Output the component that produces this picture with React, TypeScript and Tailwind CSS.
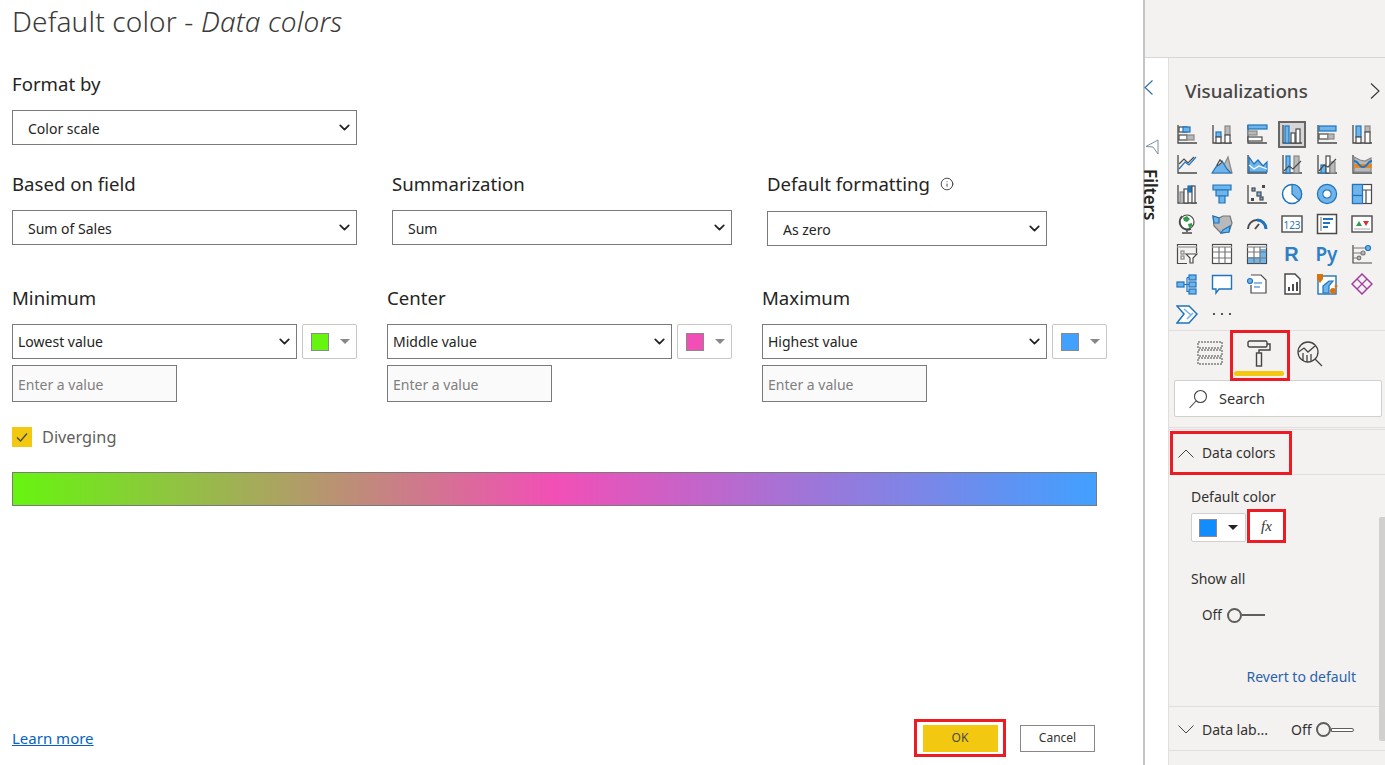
import type { ReactNode } from "react";
import { ChevronDown, Info } from "lucide-react";

const font = "font-['Noto_Sans','Open_Sans',sans-serif]";
const dk = "#4a4a4a";
const bl = "#1f74bd";
const lb = "#6fb4ea";
const gr = "#b9b9b9";

function Ico({ children }: { children: ReactNode }) {
  return (
    <svg viewBox="0 0 22 22" width="22" height="22" fill="none" strokeWidth="1.2" stroke={dk}>
      {children}
    </svg>
  );
}

function Axes() {
  return <path d="M2 2V20H21" stroke={dk} strokeWidth="1.3" />;
}

function ThinChevron({ up }: { up?: boolean }) {
  return (
    <svg viewBox="0 0 16 9" width="16" height="9" fill="none" stroke="#444" strokeWidth="1">
      <path d={up ? "M0.5 8.5 8 1l7.5 7.5" : "M0.5 0.5 8 8l7.5-7.5"} />
    </svg>
  );
}

const vizIcons: ReactNode[] = [
  <Ico><Axes /><rect x="3" y="4" width="8" height="5" fill="#fff" stroke={dk} /><rect x="7" y="4" width="7" height="5" fill={lb} stroke={bl} /><rect x="3" y="12" width="8" height="5" fill="#fff" stroke={dk} /><rect x="11" y="12" width="7" height="5" fill={gr} stroke="#888" /></Ico>,
  <Ico><Axes /><rect x="5" y="9" width="5" height="5" fill={lb} stroke={bl} /><rect x="5" y="14" width="5" height="6" fill="#fff" /><rect x="14" y="3" width="5" height="9" fill={gr} stroke="#888" /><rect x="14" y="12" width="5" height="8" fill="#fff" /></Ico>,
  <Ico><Axes /><rect x="2" y="2" width="19" height="4" fill={lb} stroke={bl} /><rect x="2" y="8" width="9" height="4" fill={gr} stroke="#888" /><rect x="2" y="14" width="14" height="4" fill="#fff" /></Ico>,
  <Ico><Axes /><rect x="4" y="3" width="4" height="17" fill={lb} stroke={bl} /><rect x="10" y="10" width="4" height="10" fill="#fff" /><rect x="15" y="6" width="4" height="14" fill="#fff" /></Ico>,
  <Ico><Axes /><rect x="3" y="3" width="17" height="5" fill={lb} stroke={bl} /><rect x="3" y="11" width="9" height="5" fill="#fff" /><rect x="12" y="11" width="6" height="5" fill={gr} stroke="#888" /></Ico>,
  <Ico><Axes /><rect x="5" y="3" width="5" height="11" fill={lb} stroke={bl} /><rect x="5" y="14" width="5" height="6" fill="#fff" /><rect x="14" y="3" width="5" height="6" fill={gr} stroke="#888" /><rect x="14" y="9" width="5" height="11" fill="#fff" /></Ico>,
  <Ico><Axes /><path d="M3 11 8 6l4 4 6-6" stroke={dk} /><path d="M3 16 9 9l4 3 7-8" stroke={bl} /></Ico>,
  <Ico><path d="M2 20 9 7l4 5 4-8 4 16Z" fill={gr} stroke="#888" /><path d="M1 20 5 14 11 8l5 8 4 4Z" fill={lb} stroke={bl} /><path d="M6 12 9 7l2 2-3 3Z" fill="#fff" /></Ico>,
  <Ico><Axes /><path d="M3 4 8 11l4-4 5 6 4-4v10H3Z" fill={lb} stroke={bl} /><path d="M3 12l5 4 5-3 8 3" stroke="#fff" /></Ico>,
  <Ico><Axes /><rect x="5" y="3" width="4" height="17" fill={lb} stroke={bl} /><rect x="13" y="3" width="5" height="17" fill={gr} stroke="#888" /><path d="M3 18 8 13l4 3 8-8" /></Ico>,
  <Ico><Axes /><rect x="5" y="12" width="5" height="8" fill={lb} stroke={bl} /><rect x="10" y="3" width="4" height="17" fill="#fff" /><rect x="14" y="9" width="5" height="11" fill={gr} stroke="#888" /><path d="M3 18 8 12l4 2 8-8" /></Ico>,
  <Ico><Axes /><path d="M3 4 9 7l5 1 6-3v14H3Z" fill={gr} stroke="#888" /><path d="M3 11h18v4H3Z" fill="#e28a2b" stroke="none" /><path d="M3 8c5 0 4 6 9 6s4-6 9-6" stroke={bl} strokeWidth="2" /></Ico>,
  <Ico><Axes /><rect x="4" y="9" width="4" height="11" fill={gr} stroke="#888" /><rect x="8" y="6" width="4" height="14" fill="#fff" /><rect x="12" y="3" width="4" height="6" fill={bl} stroke={bl} /><rect x="16" y="3" width="3" height="17" fill="#fff" /></Ico>,
  <Ico><path d="M2 2H20V7H2Z" fill={lb} stroke={bl} /><path d="M5 7H17V13H5Z" fill={lb} stroke={bl} /><path d="M8 13H14V20H8Z" fill={lb} stroke={bl} /></Ico>,
  <Ico><Axes /><rect x="6" y="5" width="3" height="3" fill={lb} /><rect x="11" y="9" width="4" height="4" fill={lb} /><rect x="16" y="2" width="3" height="3" fill={dk} stroke="none" /><rect x="5" y="15" width="3" height="3" fill={dk} stroke="none" /><rect x="14" y="14" width="3" height="3" fill={lb} /></Ico>,
  <Ico><circle cx="11" cy="11" r="9.5" fill="#fff" stroke={bl} strokeWidth="1.5" /><path d="M11 11V1.5A9.5 9.5 0 0 1 18 17.5Z" fill={lb} stroke={bl} /></Ico>,
  <Ico><circle cx="11" cy="11" r="7" fill="#fff" stroke={lb} strokeWidth="5" /><circle cx="11" cy="11" r="4.2" stroke={bl} /><circle cx="11" cy="11" r="9.6" stroke={bl} /></Ico>,
  <Ico><rect x="1.5" y="1.5" width="19" height="19" fill="#fff" stroke={dk} /><rect x="1.5" y="1.5" width="10" height="11" fill={lb} stroke={bl} /><rect x="1.5" y="12.5" width="10" height="8" fill={lb} stroke={bl} /><path d="M11.5 7H20.5M15 7V20.5" /></Ico>,
  <Ico><circle cx="11" cy="9" r="7" fill="#fff" /><path d="M7 5l4-2 3 3-3 3-3-1ZM12 11l4-1 0 3-3 2Z" fill="#2e9e4a" stroke="none" /><path d="M6 3A8 8 0 0 0 15 16M11 16V19M6 20H16" strokeWidth="1.5" /></Ico>,
  <Ico><path d="M2 3 8 5 12 3 19 3 21 10 18 19 10 20 3 13Z" fill={gr} stroke="#777" /><path d="M2 3 8 5V10H3ZM12 17l7-4-1 6-8 1Z" fill={lb} stroke={bl} /></Ico>,
  <Ico><path d="M2 16A9 9 0 0 1 20 16" strokeWidth="2" /><path d="M11 7A9 9 0 0 1 20 16" stroke={bl} strokeWidth="3" /><path d="M9 16 13 11" strokeWidth="2" /></Ico>,
  <Ico><rect x="1" y="3" width="20" height="16" fill="#fff" stroke={dk} strokeWidth="1.4" /><text x="11" y="15.5" textAnchor="middle" fontSize="10" fill={bl} stroke="none" fontFamily="Noto Sans">123</text></Ico>,
  <Ico><rect x="1.5" y="1.5" width="19" height="19" fill="#fff" strokeWidth="1.5" /><path d="M5 4V18" stroke={gr} strokeWidth="2" /><path d="M7 6H17M7 10H14M7 14H12" stroke={bl} strokeWidth="1.8" /></Ico>,
  <Ico><rect x="1" y="3" width="20" height="16" fill="#fff" strokeWidth="1.4" /><path d="M5 13 8 8l3 5Z" fill="#2e9e4a" stroke="none" /><path d="M12 8h6l-3 5Z" fill="#d13438" stroke="none" /><path d="M3 16H19" stroke={gr} /></Ico>,
  <Ico><path d="M1.5 17V1.5H20.5V10M1.5 17V20.5H11" /><path d="M1.5 4H20.5" stroke={gr} strokeWidth="2" /><rect x="5" y="8" width="3" height="3" stroke="#888" /><rect x="5" y="13" width="3" height="3" stroke="#888" /><path d="M10 11H21L17 15V20H14V15Z" fill="#fff" /></Ico>,
  <Ico><rect x="1.5" y="1.5" width="19" height="19" fill="#fff" /><path d="M1.5 4H20.5" stroke={gr} strokeWidth="2" /><path d="M1.5 9H20.5M1.5 15H20.5M8 4V20.5M14 4V20.5" stroke="#777" /></Ico>,
  <Ico><rect x="1.5" y="1.5" width="19" height="19" fill="#fff" /><path d="M1.5 4H20.5" stroke={gr} strokeWidth="2" /><path d="M14 6H20V20H2V14H14Z" fill={lb} stroke="none" /><path d="M1.5 9H20.5M1.5 15H20.5M8 4V20.5M14 4V20.5" stroke="#777" /></Ico>,
  <div className="font-['Liberation_Sans',sans-serif] text-[20px] font-bold leading-[22px] text-[#2f80c2]">R</div>,
  <div className="text-[19px] font-semibold leading-[22px] text-[#2f80c2]">Py</div>,
  <Ico><path d="M2 2V20H21" /><path d="M2 5H15M2 10H11M2 15H7" stroke="#777" /><circle cx="17" cy="5" r="2.5" fill={lb} stroke={bl} /><circle cx="12" cy="10" r="2" fill={gr} stroke="#777" /><circle cx="8" cy="15" r="1.8" fill={gr} stroke="#777" /></Ico>,
  <Ico><rect x="1" y="9" width="7" height="5" fill={lb} stroke={bl} /><rect x="13" y="2" width="7" height="5" fill={lb} stroke={bl} /><rect x="13" y="9" width="7" height="5" fill={lb} stroke={bl} /><rect x="13" y="16" width="7" height="5" fill={lb} stroke={bl} /><path d="M8 11.5H13M11 4.5V18.5H13M11 4.5H13" stroke={bl} /></Ico>,
  <Ico><path d="M1.5 2.5H20.5V16H8L5 20V16H1.5Z" fill="#fff" stroke={bl} strokeWidth="1.4" /></Ico>,
  <Ico><path d="M5 2H15L20 7V20H5V12" fill="#fff" /><circle cx="4" cy="8" r="2.5" fill={lb} stroke={bl} /><path d="M8 10H16M8 14H14" stroke={bl} /></Ico>,
  <Ico><path d="M4 1H14L19 6V21H4Z" fill="#fff" strokeWidth="1.5" /><path d="M7 18V14H9V18ZM11 18V11H13V18ZM15 18V9H17V18Z" fill={dk} stroke="none" /></Ico>,
  <Ico><rect x="2" y="3" width="18" height="18" fill="#fff" stroke={bl} strokeWidth="1.4" /><path d="M7 13 13 8H17L13 13V20H7Z" fill={lb} stroke={bl} /><path d="M1 1H7V6L4 10 1 6Z" fill="#d9730d" stroke="none" /><circle cx="17" cy="18" r="3" fill="#d9730d" stroke="none" /><circle cx="20" cy="13" r="1.5" fill="#d9730d" stroke="none" /></Ico>,
  <Ico><path d="M11 1 21 11 11 21 1 11Z" stroke="#a33ea1" strokeWidth="1.5" /><path d="M6 6 16 16M16 6 6 16" stroke="#a33ea1" /></Ico>,
  <Ico><path d="M1 3H13L21 11 13 20H1L8 11Z" fill="#fff" stroke={bl} strokeWidth="1.5" /><path d="M8 6 15 12M11 16 17 10" stroke={lb} strokeWidth="1.5" /></Ico>,
  <div className="flex h-[22px] items-center gap-[6px] px-[1px]"><span className="h-[2px] w-[2px] bg-[#555]" /><span className="h-[2px] w-[2px] bg-[#555]" /><span className="h-[2px] w-[2px] bg-[#555]" /></div>,
];

function Select({ value, width, mt }: { value: string; width: string; mt?: string }) {
  return (
    <div className={`flex h-[35px] items-center justify-between border border-[#7a7a7a] bg-white pr-[3px] text-[14px] text-[#252423] ${width} ${mt ?? ""}`}>
      <span className="pl-[15px] pt-[2px]">{value}</span>
      <ChevronDown size={17} strokeWidth={2.4} color="#222" />
    </div>
  );
}

function ColorColumn({ label, value, color }: { label: string; value: string; color: string }) {
  return (
    <div className="w-[345px]">
      <div className="text-[18.6px] leading-[26px] text-[#252423]">{label}</div>
      <div className="mt-[13px] flex gap-[5px]">
        <div className="flex h-[35px] w-[285px] items-center justify-between border border-[#7a7a7a] bg-white pr-[3px] text-[14px] text-[#252423]">
          <span className="pl-[5px]">{value}</span>
          <ChevronDown size={17} strokeWidth={2.4} color="#222" />
        </div>
        <div className="flex h-[35px] w-[55px] items-center gap-[11px] rounded-[2px] border border-[#c8c6c4] bg-white pl-[8px]">
          <span className={`h-[18px] w-[18px] border border-[#8a8a8a] ${color}`} />
          <span className="h-0 w-0 border-x-[5px] border-t-[5px] border-x-transparent border-t-[#8a8886]" />
        </div>
      </div>
      <div className="mt-[6px] flex h-[37px] w-[165px] items-center border border-[#7a7a7a] bg-[#fafafa] pl-[5px] pt-[1px] text-[14px] text-[#7f7f7f]">
        Enter a value
      </div>
    </div>
  );
}

function Toggle({ double }: { double?: boolean }) {
  return (
    <span className="flex items-center">
      <span className="h-[15px] w-[15px] rounded-full border-[2px] border-[#605e5c] bg-[#f3f2f1]" />
      {double ? (
        <span className="h-[4px] w-[23px] rounded-r-full border border-[#605e5c] bg-white" />
      ) : (
        <span className="h-[2px] w-[23px] bg-[#605e5c]" />
      )}
    </span>
  );
}

export default function App() {
  return (
    <div className={`flex h-[765px] w-[1385px] overflow-hidden bg-white ${font}`}>
      <main className="flex w-[1143px] flex-col pl-[12px]">
        <h1 className="mt-[2px] h-[39px] text-[28px] font-light leading-[38px] tracking-[0.15px] text-[#3b3a39]">
          Default color - <em>Data colors</em>
        </h1>

        <div className="mt-[30px] text-[18.6px] leading-[26px] text-[#252423]">Format by</div>
        <Select value="Color scale" width="w-[345px]" mt="mt-[13px]" />

        <div className="mt-[26px] flex">
          <div className="w-[345px]">
            <div className="text-[18.6px] leading-[26px] text-[#252423]">Based on field</div>
            <Select value="Sum of Sales" width="w-[345px]" mt="mt-[13px]" />
          </div>
          <div className="ml-[35px] w-[340px]">
            <div className="text-[18.6px] leading-[26px] text-[#252423]">Summarization</div>
            <Select value="Sum" width="w-[340px]" mt="mt-[13px]" />
          </div>
          <div className="ml-[35px] w-[280px]">
            <div className="flex items-center gap-[10px] text-[18.6px] leading-[26px] text-[#252423]">
              Default formatting
              <Info size={14} strokeWidth={1.5} color="#333" />
            </div>
            <Select value="As zero" width="w-[280px]" mt="mt-[14px]" />
          </div>
        </div>

        <div className="mt-[39px] flex gap-[30px]">
          <ColorColumn label="Minimum" value="Lowest value" color="bg-[#66f50f]" />
          <ColorColumn label="Center" value="Middle value" color="bg-[#f24fb6]" />
          <ColorColumn label="Maximum" value="Highest value" color="bg-[#42a0ff]" />
        </div>

        <div className="mt-[25px] flex items-center gap-[10px]">
          <span className="flex h-[20px] w-[20px] items-center justify-center bg-[#f2c811]">
            <svg viewBox="0 0 12 12" width="12" height="12" fill="none" stroke="#444" strokeWidth="1.2">
              <path d="M1 6.5 4.5 10 11 2.5" />
            </svg>
          </span>
          <span className="text-[16.3px] leading-[20px] text-[#605e5c]">Diverging</span>
        </div>

        <div className="mt-[25px] h-[34px] w-[1085px] border border-[#7a7a7a] bg-[linear-gradient(to_right,#66f50f,#f24fb6_50%,#42a0ff)]" />

        <div className="mb-[8px] mt-auto flex h-[38px] w-[1083px] items-center">
          <a className="text-[15px] text-[#0563c1] underline">Learn more</a>
          <div className="ml-auto flex items-center">
            <div className="flex h-[38px] w-[92px] items-center justify-center border-[3px] border-[#ed1c24]">
              <button className="h-[27px] w-[75px] bg-[#f2c811] text-[12px] text-[#4a4a4a]">OK</button>
            </div>
            <button className="ml-[14px] h-[27px] w-[75px] border border-[#8a8886] bg-white text-[12px] text-[#323130]">Cancel</button>
          </div>
        </div>
      </main>

      <div className="w-[2px] bg-[#c4c4c4]" />

      <div className="flex w-[240px] flex-col">
        <div className="h-[58px] border-b border-[#d6d6d6] bg-[#f3f2f1]" />
        <div className="flex flex-1">
          <aside className="flex w-[23px] flex-col items-start bg-white pt-[22px]">
            <svg className="-ml-[1px]" viewBox="0 0 9 15" width="9" height="15" fill="none" stroke="#2b6a9e" strokeWidth="1.1">
              <path d="M8.5 0.5 1 7.5l7.5 7" />
            </svg>
            <svg className="mt-[44px]" viewBox="0 0 14 16" width="14" height="16" fill="none" stroke="#7b8f9f" strokeWidth="1">
              <path d="M1 7.5 13 1V15L8 8Z" />
            </svg>
            <span className="-ml-[4px] mt-[14px] text-[17px] font-semibold leading-[18px] text-[#252423] [writing-mode:vertical-rl]">Filters</span>
          </aside>

          <section className="relative flex w-[217px] flex-col bg-[#f3f2f1] shadow-[inset_1px_0_0_#e1dfdd]">
            <div className="flex h-[61px] items-center justify-between pl-[17px] pr-[5px] pt-[5px]">
              <span className="text-[18.8px] font-medium text-[#484644]">Visualizations</span>
              <svg viewBox="0 0 10 16" width="10" height="16" fill="none" stroke="#333" strokeWidth="1.1">
                <path d="M1 0.5 9 8l-8 7.5" />
              </svg>
            </div>

            <div className="grid auto-rows-[30px] grid-cols-[repeat(6,35px)] pl-[1px]">
              {vizIcons.map((icon, i) => (
                <div key={i} className="flex items-center justify-center">
                  {i === 3 ? (
                    <span className="flex h-[27px] w-[28px] shrink-0 items-center justify-center border-[2px] border-[#666] bg-[#d6d6d6]">{icon}</span>
                  ) : (
                    icon
                  )}
                </div>
              ))}
            </div>

            <div className="mt-[1px] flex h-[51px] items-start border-t border-[#e1dfdd] pl-[29px]">
              <svg className="mt-[10px]" viewBox="0 0 26 24" width="26" height="24" fill="none" stroke="#444" strokeDasharray="2 1">
                <path d="M1 1H25V7H1ZM1 9H25V15H1ZM1 17H25V23H1Z" />
              </svg>
              <div className="relative -mt-[1px] ml-[7px] h-[51px] w-[60px] border-[3px] border-[#ed1c24]">
                <svg className="absolute left-[14px] top-[7px]" viewBox="0 0 24 27" width="24" height="27" fill="none" stroke="#444" strokeWidth="1.4">
                  <rect x="1" y="1" width="19" height="6" rx="1.5" />
                  <path d="M20 4H23V10H12V13" />
                  <rect x="9.5" y="13" width="5" height="13" fill="#f3f2f1" />
                </svg>
                <span className="absolute bottom-[2px] left-[1px] h-[5px] w-[50px] rounded-full bg-[#f2c811]" />
              </div>
              <svg className="ml-[7px] mt-[10px]" viewBox="0 0 26 26" width="26" height="26" fill="none" stroke="#444" strokeWidth="1.3">
                <circle cx="11" cy="11" r="10" />
                <path d="M18 18 25 25" />
                <path d="M1.5 11 7 7l4 4 7-6" />
                <path d="M6 12V20M10 14V21M14 13V20" />
              </svg>
            </div>

            <div className="ml-[6px] mt-[-1px] flex h-[37px] w-[208px] items-center rounded-[2px] border border-[#d2d0ce] bg-white pl-[13px] text-[14.5px] text-[#323130]">
              <svg viewBox="0 0 20 20" width="20" height="20" fill="none" stroke="#444" strokeWidth="1.1">
                <circle cx="12.5" cy="7.5" r="6" />
                <path d="M8 12 1.5 19" />
              </svg>
              <span className="ml-[11px]">Search</span>
            </div>

            <div className="mt-[10px] h-[3px] border-y border-[#e1dfdd]" />

            <div className="flex h-[45px] items-stretch border-b border-[#e1dfdd] pt-[1px]">
              <div className="-mb-[1px] ml-[2px] flex w-[122px] items-center gap-[8px] border-[3px] border-[#ed1c24] pl-[5px] text-[13.8px] text-[#323130]">
                <ThinChevron up />
                Data colors
              </div>
            </div>

            <div className="pl-[23px]">
              <div className="mt-[12px] text-[14px] leading-[20px] text-[#323130]">Default color</div>
              <div className="mt-[2px] flex items-start gap-[1px]">
                <div className="mt-[4px] flex h-[29px] w-[55px] items-center gap-[11px] rounded-[2px] border border-[#d2d0ce] bg-white pl-[7px]">
                  <span className="h-[18px] w-[18px] border border-[#8a8a8a] bg-[#118dff]" />
                  <span className="h-0 w-0 border-x-[5px] border-t-[5px] border-x-transparent border-t-[#222]" />
                </div>
                <div className="flex h-[34px] w-[39px] items-center justify-center border-[3px] border-[#ed1c24] bg-white font-['Liberation_Serif',serif] text-[15px] italic text-[#333]">
                  fx
                </div>
              </div>
              <div className="mt-[26px] text-[14px] leading-[20px] text-[#323130]">Show all</div>
              <div className="ml-[11px] mt-[16px] flex h-[20px] items-center gap-[5px] text-[13.5px] text-[#323130]">
                Off <Toggle />
              </div>
            </div>

            <div className="mt-[42px] pr-[29px] text-right text-[14px] leading-[20px] text-[#2a62a8]">Revert to default</div>

            <div className="mt-[19px] flex h-[45px] items-center border-y border-[#e1dfdd] pl-[10px] pt-[2px] text-[14px] text-[#323130]">
              <ThinChevron />
              <span className="ml-[8px]">Data lab...</span>
              <span className="ml-[23px] mr-[4px]">Off</span>
              <Toggle double />
            </div>

            <div className="absolute bottom-[24px] right-0 h-[224px] w-[6px] rounded-l-[2px] bg-[#d2d0ce]" />
          </section>
        </div>
      </div>
    </div>
  );
}
